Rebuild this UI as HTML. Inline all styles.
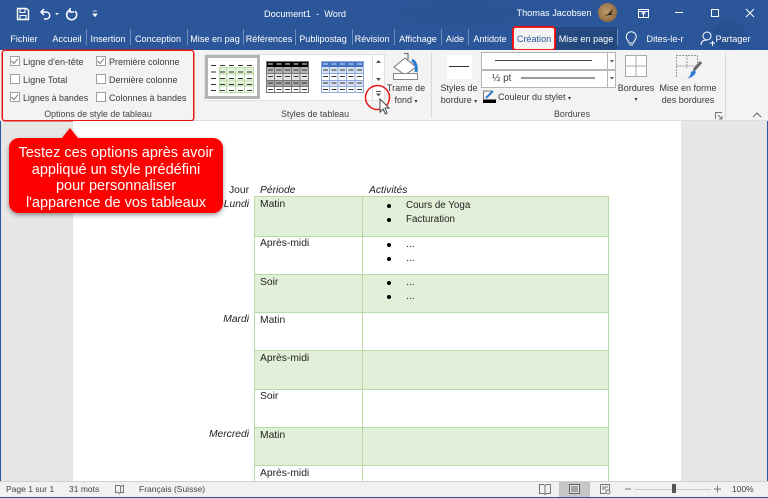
<!DOCTYPE html>
<html lang="fr"><head><meta charset="utf-8"><title>Document1 - Word</title>
<style>
*{box-sizing:border-box}
html,body{margin:0;padding:0;width:768px;height:498px;overflow:hidden;background:#e6e6e6}
body{position:relative;font-family:"Liberation Sans",sans-serif;font-size:9.2px;color:#3a3a3a;filter:blur(.3px)}
.a{position:absolute;white-space:nowrap}
.t{position:absolute;white-space:nowrap;line-height:12px;transform:translateX(-50%)}
.tab{color:#fff;top:33px;font-size:9.1px}
.sep{position:absolute;top:29px;width:1px;height:16px;background:#6d8dbb}
.cb{position:absolute;width:10px;height:10px;border:1px solid #a0a0a0;background:#fff}
.d{color:#222;font-size:10.3px;line-height:13px;position:absolute;white-space:nowrap}
.i{font-style:italic}
.row{position:absolute;left:254px;width:355px;border:1px solid #b9dba4}
.g{background:#e2efd9}
.b{position:absolute;width:4px;height:4px;border-radius:50%;background:#000}
</style></head><body>
<!-- title bar -->
<div class="a" style="left:0;top:0;width:768px;height:50px;background:#2b579a"></div>
<div class="a" style="left:712px;top:20px;width:34px;height:30px;border-radius:50%;background:#275090"></div>
<div class="a" style="left:400px;top:0;width:120px;height:26px;border-radius:50%;background:#295595"></div>
<svg class="a" style="left:0;top:0" width="768" height="50" fill="none" stroke="#fff">
<path d="M17.500 8.500h9l2 2v9h-11z" stroke-width="1.400"/><path d="M20 8.500v4h5v-4M20 19.500v-4h6v4" stroke-width="1"/>
<path d="M44 9l-3 3 3 3M41 12h5c5 0 5 7 0 7h-2" stroke-width="1.500"/>
<path d="M55 13h4l-2 2z" fill="#fff" stroke="none"/>
<path d="M71 10a5 5 0 1 0 5 1M71 8v4h4" stroke-width="1.500" transform="translate(-1 0)"/>
<path d="M93 11h4M93 14h4l-2 2.500z" fill="#fff" stroke-width=".8"/>
<path d="M638.500 9.500h10v8h-10zM638.500 11.500h10M643.500 12.500v5M641.500 14l2-2 2 2" stroke-width="1"/>
<path d="M675 12.500h8" stroke-width="1"/><rect x="711.500" y="9.500" width="7" height="7" stroke-width="1"/>
<path d="M746 9l8 8M754 9l-8 8" stroke-width="1"/>
<path d="M627.500 40a5 5 0 1 1 7.500 0c-1 1-1 2-1.500 3h-4.500c-.5-1-.5-2-1.500-3zM629.500 45h3.500" stroke-width="1"/>
<circle cx="707" cy="36" r="4" stroke-width="1"/><path d="M701 45c0-4 2.500-5 6-5M710 43h5M712.500 41v5" stroke-width="1"/>
</svg>
<div class="a" style="left:598px;top:3px;width:19px;height:19px;border-radius:50%;background:radial-gradient(circle at 45% 45%,#c09a68,#7d5a35)"></div>
<svg class="a" style="left:598px;top:3px" width="19" height="19"><path d="M6 13l4-2 5-5-2 5 2 1-4 0z" fill="#2c2016"/></svg>
<div class="t" style="left:305px;top:8px;color:#fff">Document1 &nbsp;-&nbsp; Word</div>
<div class="t" style="left:554px;top:7px;color:#fff">Thomas Jacobsen</div>
<div class="a" style="left:555px;top:27px;width:62px;height:23px;background:#24497f"></div>
<div class="a" style="left:513px;top:27px;width:42px;height:23px;background:#f3f3f3;border:1px solid #f02020;border-radius:3px;box-shadow:0 0 0 1px #e81010"></div>
<div class="t tab" style="left:24px">Fichier</div>
<div class="t tab" style="left:67px">Accueil</div>
<div class="t tab" style="left:108px">Insertion</div>
<div class="t tab" style="left:158px">Conception</div>
<div class="t tab" style="left:215px">Mise en pag</div>
<div class="t tab" style="left:269px">Références</div>
<div class="t tab" style="left:323px">Publipostag</div>
<div class="t tab" style="left:372px">Révision</div>
<div class="t tab" style="left:418px">Affichage</div>
<div class="t tab" style="left:455px">Aide</div>
<div class="t tab" style="left:490px">Antidote</div>
<div class="t tab" style="left:534px;color:#2b579a">Création</div>
<div class="t tab" style="left:586px">Mise en page</div>
<div class="t tab" style="left:665px">Dites-le-r</div>
<div class="t tab" style="left:733px">Partager</div>
<div class="sep" style="left:86px"></div><div class="sep" style="left:130px"></div><div class="sep" style="left:187px"></div><div class="sep" style="left:243px"></div><div class="sep" style="left:295px"></div><div class="sep" style="left:352px"></div><div class="sep" style="left:394px"></div><div class="sep" style="left:441px"></div><div class="sep" style="left:468px"></div><div class="sep" style="left:617px"></div>
<!-- ribbon -->
<div class="a" style="left:0;top:50px;width:768px;height:71px;background:#f3f3f3;border-bottom:1px solid #dcdcdc"></div>
<div class="a" style="left:2px;top:50px;width:192px;height:71px;border:1px solid #e81818;border-radius:3px;box-shadow:0 0 0 .5px #e81818"></div>
<div class="cb" style="left:10px;top:56px"></div><div class="cb" style="left:10px;top:74px"></div><div class="cb" style="left:10px;top:92px"></div>
<div class="cb" style="left:96px;top:56px"></div><div class="cb" style="left:96px;top:74px"></div><div class="cb" style="left:96px;top:92px"></div>
<svg class="a" style="left:0;top:50px" width="120" height="60" fill="none" stroke="#777"><path d="M11.500 11l2.500 2.500 4-5M11.500 47l2.500 2.500 4-5M97.500 11l2.500 2.500 4-5"/></svg>
<div class="a" style="left:23px;top:56px;line-height:12px">Ligne d'en-tête</div>
<div class="a" style="left:23px;top:74px;line-height:12px">Ligne Total</div>
<div class="a" style="left:23px;top:92px;line-height:12px;font-size:8.9px">Lignes à bandes</div>
<div class="a" style="left:109px;top:56px;line-height:12px;font-size:9px">Première colonne</div>
<div class="a" style="left:109px;top:74px;line-height:12px;font-size:9px">Dernière colonne</div>
<div class="a" style="left:109px;top:92px;line-height:12px;font-size:9px">Colonnes à bandes</div>
<div class="t" style="left:98px;top:108px;color:#444;font-size:8.900px">Options de style de tableau</div>
<!-- gallery -->
<div class="a" style="left:204px;top:54px;width:181px;height:47px;background:#fff;border:1px solid #e2e2e2"></div>
<div class="a" style="left:205px;top:55px;width:55px;height:44px;border:3px solid #b4b4b4"></div>
<svg class="a" style="left:205px;top:55px" width="170" height="44" fill="none">
<!-- green -->
<rect x="14.500" y="12.500" width="34" height="25" fill="#fff" stroke="#b9dba4"/>
<rect x="15" y="13" width="33" height="6" fill="#e2efd9"/><rect x="15" y="25" width="33" height="6" fill="#e2efd9"/>
<path d="M14 19h35M14 25h35M14 31h35M21.500 12v26M30.500 12v26M39.500 12v26" stroke="#b9dba4"/>
<g stroke="#333" stroke-dasharray="5 4"><path d="M6 10.500h45M6 17h45M6 23.500h45M6 29.500h45M6 35.500h45"/></g>
<!-- dark -->
<rect x="61" y="6" width="43" height="6" fill="#000"/><rect x="61" y="12" width="43" height="6" fill="#b4b4b4"/><rect x="61" y="18" width="43" height="7" fill="#e4e4e4"/><rect x="61" y="25" width="43" height="6" fill="#a8a8a8"/><rect x="61" y="31" width="43" height="6" fill="#fff"/>
<rect x="61.500" y="6.500" width="42" height="31" stroke="#777"/><path d="M61 18.500h43M61 25.500h43M61 31.500h43M69.500 12v25M78 12v25M86.500 12v25M95 12v25" stroke="#777"/>
<g stroke-dasharray="5 3.500"><path d="M63 9h41" stroke="#eee"/><path d="M63 15h41M63 21.500h41M63 28h41M63 34.500h41" stroke="#333"/></g>
<!-- blue -->
<rect x="116" y="6" width="43" height="6" fill="#4472c4"/><rect x="116" y="12" width="43" height="6" fill="#d9e2f3"/><rect x="116" y="18" width="43" height="7" fill="#fff"/><rect x="116" y="25" width="43" height="6" fill="#d9e2f3"/><rect x="116" y="31" width="43" height="6" fill="#fff"/>
<rect x="116.500" y="6.500" width="42" height="31" stroke="#8eaadb"/><path d="M116 18.500h43M116 25.500h43M116 31.500h43M124.500 12v25M133 12v25M141.500 12v25M150 12v25" stroke="#8eaadb"/>
<g stroke-dasharray="5 3.500"><path d="M118 9h41" stroke="#d9e2f3"/><path d="M118 15h41M118 21.500h41M118 28h41M118 34.500h41" stroke="#333"/></g>
</svg>
<div class="a" style="left:372px;top:54px;width:13px;height:47px;background:#fff;border:1px solid #e0e0e0"></div>
<svg class="a" style="left:372px;top:54px" width="13" height="50" fill="#555"><path d="M4 9h5l-2.500-3zM4 24h5l-2.500 3zM4 38h5v-1H4zM4 39.500h5l-2.500 3z"/></svg>
<div class="t" style="left:315px;top:108px;color:#444;font-size:8.900px">Styles de tableau</div>
<!-- trame -->
<svg class="a" style="left:390px;top:52px" width="34" height="30" fill="none" stroke="#777"><path d="M14 1.500h4v6" stroke-width="1.300"/><path d="M4 15l11-9 11 9-11 8z" fill="#fff"/><rect x="3.500" y="21.500" width="24" height="6" fill="#fff" stroke="#888"/><path d="M22 8c3 2 5 6 4 12" stroke="#2b7cd3" stroke-width="3"/></svg>
<div class="t" style="left:406px;top:82px;font-size:9px">Trame de</div>
<div class="t" style="left:406px;top:94px;font-size:9px">fond <span style="font-size:6px">▾</span></div>
<div class="a" style="left:431px;top:53px;width:1px;height:65px;background:#dadada"></div>
<div class="a" style="left:447px;top:55px;width:25px;height:24px;background:#fff"></div>
<div class="a" style="left:449px;top:66px;width:20px;height:1px;background:#333"></div>
<div class="t" style="left:459px;top:82px;font-size:9px">Styles de</div>
<div class="t" style="left:459px;top:94px;font-size:9px">bordure <span style="font-size:6px">▾</span></div>
<div class="a" style="left:481px;top:52px;width:135px;height:18px;background:#fff;border:1px solid #b5b5b5"></div>
<div class="a" style="left:481px;top:70px;width:135px;height:18px;background:#fff;border:1px solid #b5b5b5"></div>
<div class="a" style="left:607px;top:52px;width:1px;height:36px;background:#b5b5b5"></div>
<div class="a" style="left:495px;top:60px;width:97px;height:1px;background:#444"></div>
<div class="a" style="left:521px;top:77px;width:74px;height:2px;background:#999"></div>
<div class="a" style="left:492px;top:72px;font-size:10px;line-height:13px">½ pt</div>
<svg class="a" style="left:609px;top:58px" width="7" height="25" fill="#555"><path d="M1 2h4L3 4.500zM1 19h4l-2 2.500z"/></svg>
<svg class="a" style="left:483px;top:90px" width="13" height="13" fill="none"><rect y="9.500" width="13" height="3.500" fill="#000"/><path d="M3 8l7-7" stroke="#2b7cd3" stroke-width="2"/><path d="M.5 9V1h9" stroke="#777"/></svg>
<div class="a" style="left:498px;top:91px;line-height:12px;font-size:9px">Couleur du stylet <span style="font-size:6px">▾</span></div>
<svg class="a" style="left:625px;top:55px" width="23" height="23" fill="#fff" stroke="#aaa"><rect x=".5" y=".5" width="21" height="21"/><path d="M11 0v22M0 11h22" fill="none"/></svg>
<svg class="a" style="left:676px;top:55px" width="26" height="25" fill="none" stroke="#999"><path d="M.5 22V.5h21v9M.5 11h21M11 0v13" stroke-dasharray="2 1"/><path d="M5 24c7 0 9-1 10-7l3-2 2 2-1 2c-2 3-6 5-14 5z" fill="#2b7cd3" stroke="none"/><path d="M18 15l7-8" stroke="#666" stroke-width="3"/></svg>
<div class="t" style="left:636px;top:82px;font-size:9px">Bordures</div>
<div class="t" style="left:636px;top:94px;font-size:6px">▾</div>
<div class="t" style="left:688px;top:82px;font-size:9px">Mise en forme</div>
<div class="t" style="left:688px;top:94px;font-size:9px">des bordures</div>
<div class="t" style="left:572px;top:108px;color:#444;font-size:8.900px">Bordures</div>
<svg class="a" style="left:715px;top:112px" width="8" height="8" fill="none" stroke="#777"><path d="M.5 7V.5H7M3 3l4 4M7 4v3H4"/></svg>
<div class="a" style="left:725px;top:53px;width:1px;height:65px;background:#dadada"></div>
<svg class="a" style="left:752px;top:112px" width="10" height="6" fill="none" stroke="#666"><path d="M1 5l4-4 4 4"/></svg>
<!-- document -->
<div class="a" style="left:0;top:121px;width:1px;height:377px;background:#2b579a"></div>
<div class="a" style="left:767px;top:121px;width:1px;height:377px;background:#2b579a"></div>
<div class="a" style="left:73px;top:121px;width:608px;height:361px;background:#fff"></div>
<div class="a d" style="left:229px;top:184px">Jour</div>
<div class="a d i" style="left:260px;top:184px">Période</div>
<div class="a d i" style="left:369px;top:184px">Activités</div>
<div class="a d i" style="right:519px;top:198px">Lundi</div>
<div class="a d i" style="right:519px;top:313px">Mardi</div>
<div class="a d i" style="right:519px;top:428px">Mercredi</div>
<div class="row g" style="top:196px;height:41px"></div>
<div class="row" style="top:236px;height:39px"></div>
<div class="row g" style="top:274px;height:39px"></div>
<div class="row" style="top:312px;height:39px"></div>
<div class="row g" style="top:350px;height:40px"></div>
<div class="row" style="top:389px;height:39px"></div>
<div class="row g" style="top:427px;height:39px"></div>
<div class="row" style="top:465px;height:30px"></div>
<div class="a" style="left:362px;top:197px;width:1px;height:285px;background:#b9dba4"></div>
<div class="d" style="left:260px;top:198px">Matin</div>
<div class="d" style="left:260px;top:237px">Après-midi</div>
<div class="d" style="left:260px;top:276px">Soir</div>
<div class="d" style="left:260px;top:314px">Matin</div>
<div class="d" style="left:260px;top:352px">Après-midi</div>
<div class="d" style="left:260px;top:390px">Soir</div>
<div class="d" style="left:260px;top:429px">Matin</div>
<div class="d" style="left:260px;top:467px">Après-midi</div>
<div class="b" style="left:387px;top:204px"></div><div class="b" style="left:387px;top:218px"></div>
<div class="b" style="left:387px;top:243px"></div><div class="b" style="left:387px;top:257px"></div>
<div class="b" style="left:387px;top:281px"></div><div class="b" style="left:387px;top:295px"></div>
<div class="d" style="left:406px;top:199px;font-size:9.800px">Cours de Yoga</div>
<div class="d" style="left:406px;top:213px;font-size:9.800px">Facturation</div>
<div class="d" style="left:406px;top:238px">...</div><div class="d" style="left:406px;top:252px">...</div>
<div class="d" style="left:406px;top:276px">...</div><div class="d" style="left:406px;top:290px">...</div>
<!-- callout -->
<svg class="a" style="left:0;top:125px;filter:drop-shadow(0 2px 2px rgba(0,0,0,.4))" width="240" height="100"><path d="M19 13H62L70 3l8 10H213a10 10 0 0 1 10 10V78a10 10 0 0 1-10 10H19a10 10 0 0 1-10-10V23a10 10 0 0 1 10-10z" fill="#f00"/></svg>
<div class="a" style="left:0;top:145px;width:232px;text-align:center;color:#fff;font-size:14.500px;line-height:16.600px;white-space:normal">Testez ces options après avoir<br>appliqué un style prédéfini<br>pour personnaliser<br>l'apparence de vos tableaux</div>
<!-- red circle + cursor -->
<svg class="a" style="left:360px;top:80px" width="40" height="40" fill="none"><circle cx="17.500" cy="17.500" r="12" stroke="#e81818" stroke-width="1.500"/><path d="M20 19v13l3-3 2.500 5 1.500-1-2-5h4z" fill="#fff" stroke="#444"/></svg>
<!-- status -->
<div class="a" style="left:0;top:481px;width:768px;height:17px;background:#f1f1f1;border-top:1px solid #d0d0d0;border-bottom:1px solid #2b579a"></div>
<div class="a" style="left:6px;top:483px;font-size:8.500px;line-height:12px;color:#444">Page 1 sur 1</div>
<div class="a" style="left:69px;top:483px;font-size:8.500px;line-height:12px;color:#444">31 mots</div>
<div class="a" style="left:139px;top:483px;font-size:8.500px;line-height:12px;color:#444">Français (Suisse)</div>
<div class="a" style="left:559px;top:482px;width:31px;height:15px;background:#c6c6c6"></div>
<svg class="a" style="left:0;top:482px" width="768" height="14" fill="none" stroke="#777"><path d="M115.500 3.500h4l1.500 1 1.500-1h1v7h-3l-1 1-1-1h-3zM120.500 4v7M539.500 2.500h4l1.500 1 1.500-1h4v9h-4l-1.500 1-1.500-1h-4zM545 3v9"/><rect x="569.500" y="2.500" width="10" height="9" fill="#e0e0e0" stroke="#666"/><path d="M571 5h7M571 7h7M571 9h7" stroke="#666"/><path d="M600.500 2.500h9v6M600.500 2.500v9h5M602 5h6M602 7h4"/><circle cx="608" cy="10" r="2"/><path d="M625 7h6M714 7h7M717.500 3.500v7"/><path d="M635 7.500h76" stroke="#ccc"/></svg>
<div class="a" style="left:672px;top:484px;width:4px;height:9px;background:#555"></div>
<div class="a" style="left:732px;top:483px;font-size:8.500px;line-height:12px;color:#444">100%</div>
</body></html>
